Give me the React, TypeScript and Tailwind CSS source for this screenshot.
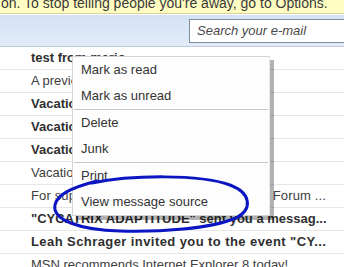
import React from 'react';

type Row = { text: string; bold?: boolean; tracking?: string };

const rows: Row[] = [
  { text: 'test from mario', bold: true },
  { text: 'A preview of your new inbox' },
  { text: 'Vacation Reply', bold: true },
  { text: 'Vacation Reply', bold: true },
  { text: 'Vacation Reply', bold: true },
  { text: 'Vacation Reply' },
  { text: 'For support, visit the Windows Live Help Forum ...', tracking: 'tracking-[0.15px]' },
  { text: '"CYCATRIX ADAPTITUDE" sent you a messag...', bold: true },
  { text: 'Leah Schrager invited you to the event "CY...', bold: true, tracking: 'tracking-[0.42px]' },
  { text: 'MSN recommends Internet Explorer 8 today!' },
];

const menu: (string | null)[] = [
  'Mark as read',
  'Mark as unread',
  null,
  'Delete',
  'Junk',
  null,
  'Print',
  'View message source',
];

export default function App() {
  return (
    <div className="relative w-[344px] h-[267px] overflow-hidden bg-white font-['Liberation_Sans',Arial,sans-serif]">
      {/* Info bar */}
      <div className="h-[14px] overflow-hidden border-b border-[#d8d29a] bg-[#fffdc2]">
        <div className="-mt-[4px] whitespace-nowrap pl-[1px] text-[14px] leading-[14px] text-[#3a3a3a]">
          on. To stop telling people you're away, go to Options.
        </div>
      </div>

      {/* Toolbar with search */}
      <div className="h-[33px] border-t border-white border-b border-b-[#bfcbdb] bg-gradient-to-b from-[#d4e2f5] to-[#e2ebf8] pt-[4px]">
        <div className="ml-[189px] flex h-[24px] w-[170px] items-center border border-[#7f8c99] bg-white pl-[7px]">
          <span className="text-[13px] italic text-[#4a4a4a]">Search your e-mail</span>
        </div>
      </div>

      {/* Message list */}
      <div>
        {rows.map((r, i) => (
          <div
            key={i}
            className="flex h-[23px] items-center overflow-hidden whitespace-nowrap border-b border-[#e6e6e6] pl-[31px] text-[13px]"
          >
            <span className={(r.bold ? 'font-bold text-[#2f2f2f] ' : 'text-[#404040] ') + (r.tracking ?? '')}>
              {r.text}
            </span>
          </div>
        ))}
      </div>

      {/* Context menu */}
      <div className="absolute left-[72px] top-[56px] w-[198px] border border-[#d4d4d4] border-r-[#e8e8e8] bg-[#fdfdfd] shadow-[4px_4px_0_rgba(0,0,0,0.3)]">
        {menu.map((m, i) =>
          m === null ? (
            <div key={i} className="mx-[1px] h-px bg-[#c6c6c6]" />
          ) : (
            <div key={i} className="flex h-[26px] items-center pl-[8px] text-[13px] text-[#333333]">
              {m}
            </div>
          )
        )}
      </div>

      {/* Hand-drawn highlight */}
      <svg className="pointer-events-none absolute left-0 top-0" width="344" height="267" viewBox="0 0 344 267">
        <path
          d="M 92 183 C 130 175, 200 174, 230 185 C 251 193, 253 209, 236 218 C 210 229, 160 232, 120 231 C 80 230, 52 220, 55 205 C 57 195, 70 188, 97 181"
          fill="none"
          stroke="#0b16c2"
          strokeWidth="3"
          strokeLinecap="round"
        />
      </svg>
    </div>
  );
}
